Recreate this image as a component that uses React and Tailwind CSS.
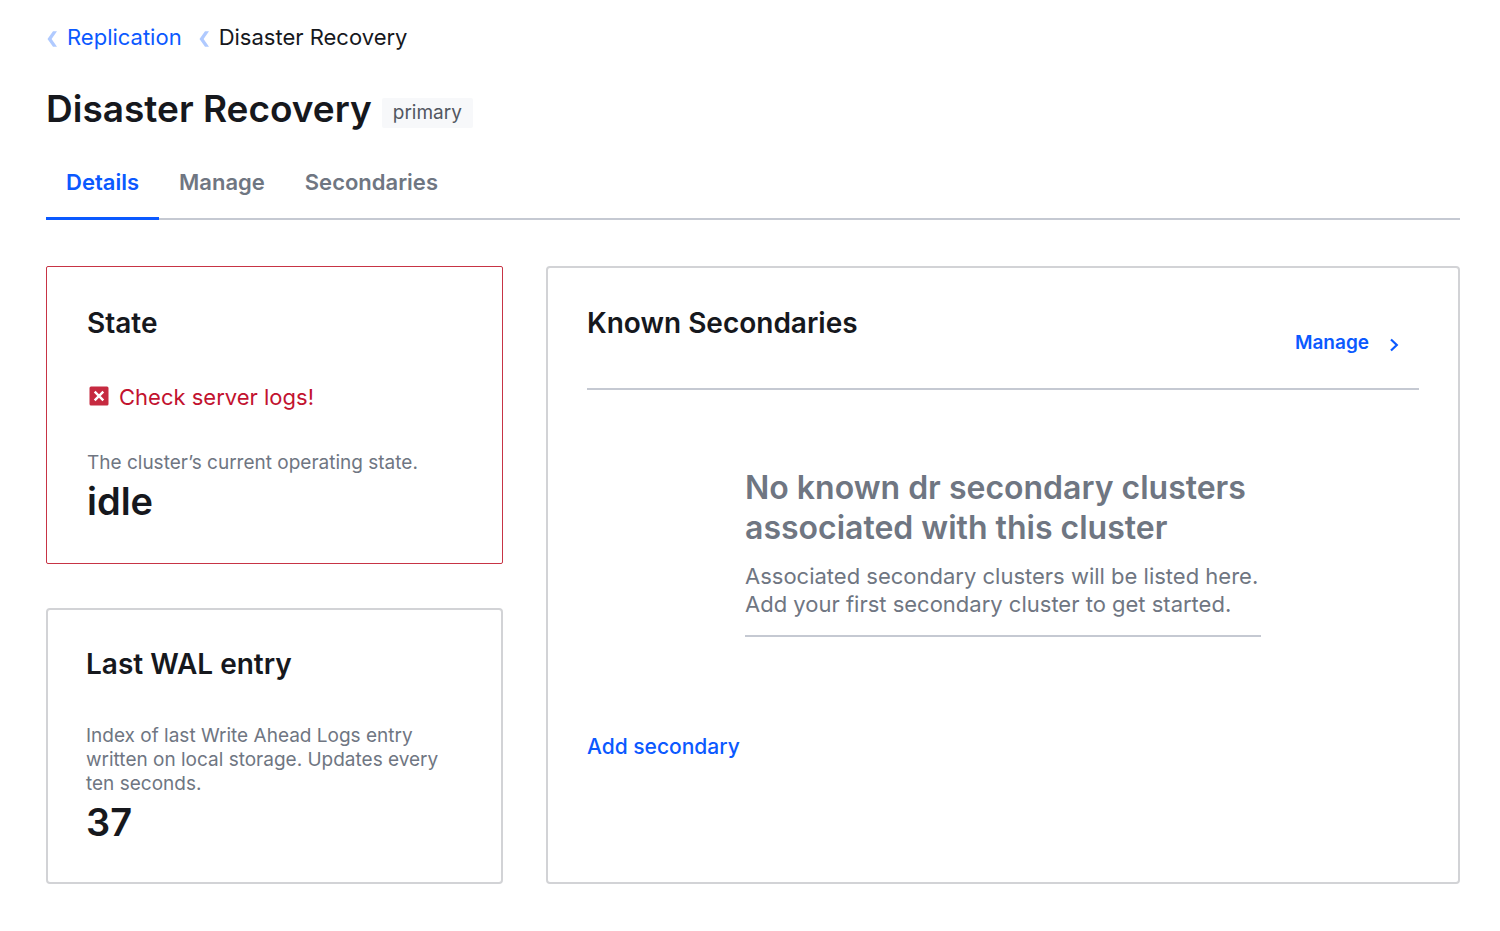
const FONT = "font-['Inter','Liberation_Sans',sans-serif]";

const tabs = ["Details", "Manage", "Secondaries"];

function CrumbChevron() {
  return (
    <svg viewBox="0 0 11 16" className="mt-1 h-4 w-[11px] shrink-0 text-[#b0caff]" fill="currentColor" aria-hidden="true">
      <path d="M1.5 8 L7 0.2 H11 L5.6 8 L11 15.8 H7 Z" />
    </svg>
  );
}

function ErrorIcon() {
  return (
    <svg viewBox="0 0 20 20" className="mb-[2px] h-5 w-5 shrink-0" aria-hidden="true">
      <rect x="0.5" y="0.5" width="19" height="19" rx="1.5" fill="#c62a40" />
      <path d="M5.7 5.7 L14.3 14.3 M14.3 5.7 L5.7 14.3" stroke="#fff" strokeWidth="2.4" fill="none" />
    </svg>
  );
}

function CardTitle({ children }) {
  return <h2 className="text-[28px] leading-8 font-semibold text-[#16181d]">{children}</h2>;
}

function Description({ children }) {
  return <p className="text-[19px] leading-6 text-[#6f7682]">{children}</p>;
}

function Value({ children }) {
  return <p className="mt-1 text-[38px] leading-11 font-semibold text-[#16181d]">{children}</p>;
}

export default function App() {
  return (
    <div className={`${FONT} min-h-screen bg-white pt-[22px] pr-10 pb-11 pl-[46px]`}>
      <nav aria-label="Breadcrumb">
        <ol className="flex items-center gap-4 text-[22px] leading-[30px]">
          <li className="flex items-center gap-[10px]">
            <CrumbChevron />
            <a href="#replication" className="text-[#0b59ff]">Replication</a>
          </li>
          <li className="flex items-center gap-[10px]">
            <CrumbChevron />
            <span aria-current="page" className="text-[#16181d]">Disaster Recovery</span>
          </li>
        </ol>
      </nav>

      <header className="mt-8 flex items-center gap-[10px]">
        <h1 className="text-[37px] leading-[50px] font-semibold text-[#16181d]">Disaster Recovery</h1>
        <span className="mt-2 rounded-xs bg-[#f7f8fa] px-[11px] text-[19px] leading-[30px] text-[#525761]">primary</span>
      </header>

      <nav aria-label="Sections" className="mt-6 flex border-b-2 border-[#c5c9d2]">
        {tabs.map((tab, i) => (
          <a
            key={tab}
            href={`#${tab.toLowerCase()}`}
            aria-current={i === 0 ? "page" : undefined}
            className={
              i === 0
                ? "-mb-[2px] border-b-3 border-[#0b59ff] px-5 pt-[9px] pb-5 text-[22px] leading-[30px] font-semibold text-[#0b59ff]"
                : "px-5 pt-[9px] pb-5 text-[22px] leading-[30px] font-semibold text-[#6f7682]"
            }
          >
            {tab}
          </a>
        ))}
      </nav>

      <main className="mt-[46px] grid grid-cols-[minmax(0,1fr)_minmax(0,2fr)] gap-[43px]">
        <div className="flex flex-col gap-11">
          <section className="rounded-xs border border-[#c73445] p-10">
            <CardTitle>State</CardTitle>
            <p className="mt-11 flex items-center gap-[10px] pl-[2px] text-[22px] leading-7 text-[#c2122f]">
              <ErrorIcon />
              Check server logs!
            </p>
            <div className="mt-10">
              <Description>The cluster’s current operating state.</Description>
              <Value>idle</Value>
            </div>
          </section>

          <section className="rounded border-2 border-[#d2d3d6] p-[38px]">
            <CardTitle>Last WAL entry</CardTitle>
            <div className="mt-11">
              <Description>
                Index of last Write Ahead Logs entry written on local storage. Updates every ten seconds.
              </Description>
              <Value>37</Value>
            </div>
          </section>
        </div>

        <section className="rounded border-2 border-[#d2d3d6] p-[39px]">
          <div className="flex justify-between border-b-2 border-[#c5c9d2] pb-[31px]">
            <CardTitle>Known Secondaries</CardTitle>
            <a href="#manage" className="mt-[22px] mr-5 flex items-center gap-5 text-[19px] leading-7 font-semibold text-[#0b59ff]">
              Manage
              <svg viewBox="0 0 10 14" className="mt-1 h-[14px] w-[10px]" fill="none" stroke="currentColor" strokeWidth="2.2" aria-hidden="true">
                <path d="M2 1.5 L7.8 7 L2 12.5" />
              </svg>
            </a>
          </div>

          <div className="mx-auto mt-[78px] max-w-[516px] border-b-2 border-[#c5c9d2] pb-[17px] text-[#6f7682]">
            <h3 className="text-[32px] leading-10 font-semibold">
              No known dr secondary clusters associated with this cluster
            </h3>
            <p className="mt-[14px] text-[22px] leading-7">
              Associated secondary clusters will be listed here. Add your first secondary cluster to get started.
            </p>
          </div>

          <a href="#add" className="mt-24 inline-block text-[21px] leading-7 font-medium text-[#0b59ff]">
            Add secondary
          </a>
        </section>
      </main>
    </div>
  );
}
